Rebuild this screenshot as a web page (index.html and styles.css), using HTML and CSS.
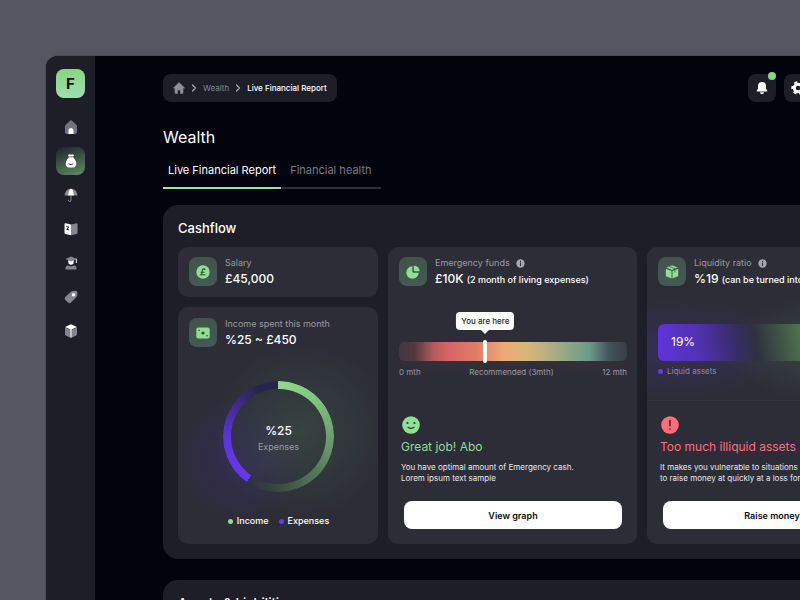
FILE: index.html
```html
<!DOCTYPE html>
<html lang="en">
<head>
    <meta charset="UTF-8">
    <meta name="viewport" content="width=device-width, initial-scale=1.0">
    <title>Wealth - Live Financial Report</title>
    <link rel="stylesheet" href="styles.css">
</head>
<body>
    <div class="app">
        <aside class="sidebar">
            <a href="#" class="logo">F</a>
            <nav class="menu">
                <a href="#" aria-label="Home">
                    <svg viewBox="0 0 14 14"><path d="M2 4.600 5.700 1a1.800 1.800 0 0 1 2.600 0L12 4.600q1 .9 1 2V12a2 2 0 0 1-2 2H3a2 2 0 0 1-2-2V6.600q0-1.100 1-2z" fill="#74747e"/><path d="M4.500 14v-3.500a2.500 2.500 0 0 1 5 0V14z" fill="#fff"/></svg>
                </a>
                <a href="#" class="active" aria-label="Wealth">
                    <svg viewBox="0 0 14 14"><rect x="4.200" y=".5" width="5.600" height="2" rx=".8" fill="#fff"/><path d="M4.800 3.300h4.400c.3 1 3.100 3 3.100 6.200 0 2.600-1.400 4-3.300 4H5c-1.900 0-3.300-1.400-3.300-4 0-3.200 2.800-5.200 3.100-6.200z" fill="#fff"/><path d="M5 10q2 1.800 4 0" stroke="#3b5442" stroke-width="1" stroke-linecap="round" fill="none"/></svg>
                </a>
                <a href="#" aria-label="Insurance">
                    <svg viewBox="0 0 14 14"><path d="M.7 7.500C.7 3.500 3.500.8 7 .8s6.300 2.700 6.300 6.700z" fill="#8a8a93"/><path d="M4.300 7.500C4.300 4 5.500.8 7 .8s2.700 3.200 2.700 6.700z" fill="#fff"/><path d="M7 7.500v4.700a1.300 1.300 0 0 1-2.600 0" stroke="#8a8a93" stroke-width="1" stroke-linecap="round" fill="none"/></svg>
                </a>
                <a href="#" aria-label="Reports">
                    <svg viewBox="0 0 14 14"><path d="M.5 2q0-1 1-.8L7 2.600v10.700l-5.500-1.400q-1-.3-1-1.200z" fill="#fff"/><path d="M7 2.600 12.600 1.200q.9-.1.900.8v8.700q0 .9-1 1.200L7 13.300z" fill="#85858e"/><path d="M2.300 4.500 5 5.200 2.600 7.300l2.600.6" stroke="#1e1e29" stroke-width="1" fill="none"/></svg>
                </a>
                <a href="#" aria-label="Learn">
                    <svg viewBox="0 0 14 14"><path d="M4.300 4h5.400v2a2.700 2.700 0 0 1-5.400 0z" fill="#fff"/><path d="M7 .5 13 3 7 5.500 1.500 3z" fill="#85858e"/><path d="M12.300 3.200v3.400" stroke="#fff" stroke-width="1" stroke-linecap="round"/><path d="M1.500 13.500v-1.700q0-2 2.200-2.300L7 10.500l3.300-1q2.200.3 2.200 2.300v1.700z" fill="#85858e"/></svg>
                </a>
                <a href="#" aria-label="Offers">
                    <svg viewBox="0 0 14 14"><path d="M7.300 1.600q.5-.5 1.300-.6l3.100-.2q1.500 0 1.600 1.500l-.1 3.200q-.1.800-.6 1.300L7 12.600q-1.500 1.200-3 0L1.200 9.800Q0 8.400 1.200 7z" fill="#85858e"/><circle cx="9.500" cy="4.800" r="1.700" fill="#fff"/></svg>
                </a>
                <a href="#" aria-label="Assets">
                    <svg viewBox="0 0 14 14"><path d="m1 3.600 5.500 2.300v7.800l-4.700-2.200q-.8-.4-.8-1.300zM13 3.600 7.500 5.900v7.800l4.700-2.200q.8-.4.8-1.300z" fill="#85858e"/><path d="m7 .3 6 2.800-6 2.700L1 3.100z" fill="#fff"/><path d="M7 5v8.600" stroke="#fff" stroke-width="1.300"/></svg>
                </a>
            </nav>
        </aside>

        <main class="content">
            <header class="topbar">
                <nav class="breadcrumb">
                    <a href="#" aria-label="Home"><svg class="crumb-home" viewBox="0 0 12 12"><path d="M6 .6 11.600 6H10v4.800q0 .7-.7.700H7.500V8h-3v3.500H2.700q-.7 0-.7-.7V6H.4z" fill="#8e8e98" stroke="#8e8e98" stroke-width=".6" stroke-linejoin="round"/></svg></a>
                    <svg class="chevron" viewBox="0 0 6 8"><path d="m1.500 1 3 3-3 3" fill="none" stroke="#a5a5ad" stroke-width="1.300" stroke-linecap="round" stroke-linejoin="round"/></svg>
                    <a href="#">Wealth</a>
                    <svg class="chevron" viewBox="0 0 6 8"><path d="m1.500 1 3 3-3 3" fill="none" stroke="#a5a5ad" stroke-width="1.300" stroke-linecap="round" stroke-linejoin="round"/></svg>
                    <span class="current">Live Financial Report</span>
                </nav>
                <div class="actions">
                    <button class="icon-button" aria-label="Notifications">
                        <svg viewBox="0 0 14 14"><path d="M7 1a4 4 0 0 1 4 4v2.500l1.300 2.200q.3.800-.6.800H2.300q-.9 0-.6-.8L3 7.500V5a4 4 0 0 1 4-4zM5 11.300h4a2 2 0 0 1-4 0z" fill="#fff"/></svg>
                        <span class="badge"></span>
                    </button>
                    <button class="icon-button" aria-label="Settings">
                        <svg viewBox="0 0 14 14"><circle cx="7" cy="7" r="3.700" fill="none" stroke="#fff" stroke-width="3"/><circle cx="7" cy="7" r="5.500" fill="none" stroke="#fff" stroke-width="2.400" stroke-dasharray="3 2.760" stroke-dashoffset="1.500"/></svg>
                    </button>
                </div>
            </header>

            <h1>Wealth</h1>
            <nav class="tabs">
                <a href="#" class="tab selected">Live Financial Report</a>
                <a href="#" class="tab">Financial health</a>
            </nav>

            <div class="panels">
                <section class="panel">
                    <h2>Cashflow</h2>
                    <div class="cards">
                        <div class="column">
                            <article class="card">
                                <div class="card-head">
                                    <span class="card-icon"><svg viewBox="0 0 14 14"><circle cx="7" cy="7" r="6.700" fill="#8fdf94"/><path d="M9 4.800c-.3-1.500-2.800-1.200-2.700.6.100 1.700.4 3.300-1.300 4.400h4M5 7.200h3" fill="none" stroke="#35483f" stroke-width="1.100" stroke-linecap="round"/></svg></span>
                                    <div>
                                        <p class="label">Salary</p>
                                        <p class="value">£45,000</p>
                                    </div>
                                </div>
                            </article>
                            <article class="card spent">
                                <div class="card-head">
                                    <span class="card-icon"><svg viewBox="0 0 14 14"><rect x=".3" y="1.500" width="13.400" height="11" rx="2" fill="#8fdf94"/><circle cx="7" cy="7" r="1.600" fill="#35483f"/><circle cx="3" cy="4.200" r=".8" fill="#35483f"/><circle cx="11" cy="9.800" r=".8" fill="#35483f"/></svg></span>
                                    <div>
                                        <p class="label">Income spent this month</p>
                                        <p class="value">%25 ~ £450</p>
                                    </div>
                                </div>
                                <div class="donut">
                                    <p class="value">%25</p>
                                    <p class="label">Expenses</p>
                                </div>
                                <ul class="legend">
                                    <li class="income">Income</li>
                                    <li class="expenses">Expenses</li>
                                </ul>
                            </article>
                        </div>

                        <article class="card">
                            <div class="card-head">
                                <span class="card-icon"><svg viewBox="0 0 14 14"><path d="M6.300 1.300v5.200q0 1.200 1.200 1.200h5.200A6.200 6.200 0 1 1 6.300 1.300z" fill="#8fdf94"/><path d="M7.800.4a6 6 0 0 1 5.800 5.800H8.800q-1 0-1-1z" fill="#8fdf94"/></svg></span>
                                <div>
                                    <p class="label">Emergency funds <svg class="info" viewBox="0 0 10 10"><circle cx="5" cy="5" r="4.600" fill="#a6a6ae"/><path d="M5 4.600v2.700M5 2.600v.5" stroke="#2d2d38" stroke-width="1.200" stroke-linecap="round"/></svg></p>
                                    <p class="value">£10K <small>(2 month of living expenses)</small></p>
                                </div>
                            </div>
                            <div class="chart">
                                <div class="range">
                                    <div class="marker"><span class="tooltip">You are here</span></div>
                                </div>
                                <div class="scale">
                                    <span>0 mth</span>
                                    <span>Recommended (3mth)</span>
                                    <span>12 mth</span>
                                </div>
                            </div>
                            <div class="message good">
                                <svg viewBox="0 0 18 18"><circle cx="9" cy="9" r="8.800" fill="#8fdf94"/><circle cx="5.500" cy="7" r="1.100" fill="#2d3b38"/><circle cx="12.500" cy="7" r="1.100" fill="#2d3b38"/><path d="M6 11.300q3 2.200 6 0" stroke="#2d3b38" stroke-width="1.200" stroke-linecap="round" fill="none"/></svg>
                                <h3>Great job! Abo</h3>
                                <p>You have optimal amount of Emergency cash.<br>Lorem ipsum text sample</p>
                                <button class="main-button">View graph</button>
                            </div>
                        </article>

                        <article class="card">
                            <div class="card-head">
                                <span class="card-icon"><svg viewBox="0 0 14 14"><path d="m7 .3 5.500 2.300L7 4.900 1.500 2.600zM.8 3.700 6.500 6v7.600l-4.900-2q-.8-.3-.8-1.100zM13.200 3.700 7.500 6v7.600l4.900-2q.8-.3.8-1.100z" fill="#8fdf94"/><path d="m4 1.300 6 2.500v3.500" stroke="#42564c" stroke-width=".8" fill="none"/></svg></span>
                                <div>
                                    <p class="label">Liquidity ratio <svg class="info" viewBox="0 0 10 10"><circle cx="5" cy="5" r="4.600" fill="#a6a6ae"/><path d="M5 4.600v2.700M5 2.600v.5" stroke="#2d2d38" stroke-width="1.200" stroke-linecap="round"/></svg></p>
                                    <p class="value">%19 <small>(can be turned into cash)</small></p>
                                </div>
                            </div>
                            <div class="chart ratio">
                                <div class="ratio-bar">19%</div>
                                <p class="ratio-label">Liquid assets</p>
                            </div>
                            <div class="message bad">
                                <svg viewBox="0 0 18 18"><circle cx="9" cy="9" r="8.800" fill="#ff6e78"/><path d="M9 4.500v5.300M9 13v.2" stroke="#4a2430" stroke-width="1.600" stroke-linecap="round"/></svg>
                                <h3>Too much illiquid assets</h3>
                                <p>It makes you vulnerable to situations where you need<br>to raise money at quickly at a loss for urgent needs</p>
                                <button class="main-button">Raise money</button>
                            </div>
                        </article>
                    </div>
                </section>

                <section class="panel">
                    <h2>Assets &amp; Liabilities</h2>
                </section>
            </div>
        </main>
    </div>
</body>
</html>
```
FILE: styles.css
```css
* {
    box-sizing: border-box;
}
body {
    margin: 0;
    height: 100vh;
    overflow: hidden;
    padding: 56px 0 0 46px;
    background-color: #565663;
    color: #fff;
    font-family: Inter, "Liberation Sans", sans-serif;
}
h1, h2, h3, p, ul {
    margin: 0;
    padding: 0;
}
a {
    color: inherit;
    text-decoration: none;
}
svg {
    display: block;
}
button {
    border: none;
    font-family: inherit;
    cursor: pointer;
}
.app {
    display: flex;
    height: 100%;
    background-color: #03030d;
    border-top-left-radius: 12px;
    box-shadow: 0 0 0 1px #4b4b58;
    overflow: hidden;
}

/* sidebar */
.sidebar {
    flex: 0 0 49px;
    padding: 13px 10px 0;
    background-color: #1e1e29;
}
.logo {
    display: flex;
    align-items: center;
    justify-content: center;
    height: 29px;
    border-radius: 8px;
    background: linear-gradient(#8ad580, #a0deb0);
    color: #0c120e;
    font-size: 15px;
    font-weight: 700;
}
.menu {
    display: flex;
    flex-direction: column;
    gap: 6px;
    margin-top: 15px;
}
.menu a {
    display: flex;
    align-items: center;
    justify-content: center;
    height: 28px;
    border-radius: 8px;
}
.menu a.active {
    background: linear-gradient(160deg, #272c33 10%, #5e8d62);
}
.menu svg {
    width: 14px;
    height: 14px;
}

/* content */
.content {
    flex: 1;
    min-width: 0;
    padding: 18px 0 0 68px;
}
.topbar {
    display: flex;
    justify-content: space-between;
    margin-right: -12px;
}
.breadcrumb {
    display: flex;
    align-items: center;
    gap: 6px;
    height: 28px;
    padding: 0 10px;
    border-radius: 8px;
    background-color: #1e1e28;
    color: #85858f;
    font-size: 8px;
}
.crumb-home {
    width: 12px;
    height: 12px;
}
.chevron {
    width: 6px;
    height: 8px;
}
.current {
    color: #fff;
    font-weight: 500;
}
.actions {
    display: flex;
    gap: 8px;
}
.icon-button {
    position: relative;
    display: flex;
    align-items: center;
    justify-content: center;
    width: 28px;
    height: 28px;
    padding: 0;
    border-radius: 8px;
    background-color: #1e1e28;
}
.icon-button svg {
    width: 14px;
    height: 14px;
}
.badge {
    position: absolute;
    top: -2px;
    right: 0;
    width: 8px;
    height: 8px;
    border-radius: 50%;
    background-color: #84d883;
}
h1 {
    margin-top: 25px;
    font-size: 16px;
    line-height: 20px;
    font-weight: 400;
}
.tabs {
    display: flex;
    width: max-content;
    margin-top: 12px;
}
.tab {
    padding: 3px 9px 9px;
    border-bottom: 2px solid #2e2e38;
    color: #7b7b84;
    font-size: 11px;
    line-height: 16px;
    font-weight: 400;
}
.tab.selected {
    padding: 3px 5px 9px;
    border-color: #a2dfa6;
    color: #fff;
}
.panels {
    display: flex;
    flex-direction: column;
    gap: 21px;
    width: max-content;
    margin-top: 16px;
}
.panel {
    padding: 15px;
    border-radius: 15px;
    background-color: #1e1e28;
}
h2 {
    font-size: 13px;
    line-height: 16px;
    font-weight: 500;
}
.cards {
    display: grid;
    grid-template-columns: 200px 249px 249px;
    gap: 10px;
    margin-top: 11px;
}
.column {
    display: flex;
    flex-direction: column;
    gap: 10px;
}
.card {
    display: flex;
    flex-direction: column;
    padding: 10px 10px 10px 11px;
    border-radius: 10px;
    background-color: #2d2d38;
    overflow: hidden;
}
.card-head {
    display: flex;
    gap: 8px;
    height: 30px;
}
.card-icon {
    display: flex;
    align-items: center;
    justify-content: center;
    width: 28px;
    height: 29px;
    border-radius: 8px;
    background: linear-gradient(#40544a, #455a56);
}
.card-icon svg {
    width: 14px;
    height: 14px;
}
.label {
    display: flex;
    align-items: center;
    gap: 6px;
    color: #9a9aa3;
    font-size: 9px;
    line-height: 12px;
}
.info {
    width: 9px;
    height: 9px;
}
.value {
    margin-top: 2px;
    font-size: 12px;
    line-height: 16px;
    font-weight: 500;
    white-space: nowrap;
}
.value small {
    font-size: 9px;
}

/* income / expenses ring */
.spent {
    flex: 1;
    background:
        radial-gradient(circle at 62% 52%, rgba(88, 145, 88, 0.22), transparent 50%),
        radial-gradient(circle at 32% 64%, rgba(78, 40, 190, 0.2), transparent 32%),
        #2d2d38;
}
.spent .card-head {
    padding-top: 1px;
    height: 31px;
}
.donut {
    position: relative;
    display: flex;
    flex-direction: column;
    align-items: center;
    justify-content: center;
    align-self: center;
    width: 111px;
    height: 111px;
    margin-top: 33px;
}
.donut .label {
    margin-top: 2px;
}
.donut::before {
    content: "";
    position: absolute;
    inset: 0;
    border-radius: 50%;
    background: conic-gradient(#8fd98a 0deg, #82c780 40deg, #6b9c6c 95deg, #4a6a51 150deg, #38453e 185deg, rgba(56, 69, 62, 0) 212deg, transparent 215deg, #6637ee 215deg, #5f36dd 265deg, #3d2b88 310deg, #27264a 335deg, #26264a 360deg);
    mask: radial-gradient(circle, transparent 47px, #000 48px);
}
.legend {
    display: flex;
    align-self: center;
    gap: 10px;
    margin-top: 22px;
    font-size: 9px;
    line-height: 14px;
    font-weight: 500;
    list-style: none;
}
.legend li, .ratio-label {
    display: flex;
    align-items: center;
    gap: 4px;
}
.legend li::before, .ratio-label::before {
    content: "";
    width: 5px;
    height: 5px;
    border-radius: 50%;
    background-color: #6a38f5;
}
.legend .income::before {
    background-color: #8fdf94;
}

/* charts */
.chart {
    height: 114px;
    padding-top: 55px;
}
.range {
    position: relative;
    height: 19px;
    border-radius: 5px;
    background: linear-gradient(90deg, #44363f, #54393f 7%, #b25a5b 15%, #d86664 22%, #e07c69 34%, #ecaa76 46%, #dab57a 56%, #b0ad80 67%, #7ba289 79%, #6b978a 84%, #41545a 92%, #383e49);
    box-shadow: 0 8px 20px -8px rgba(220, 130, 100, 0.3);
}
.marker {
    position: absolute;
    left: 37%;
    top: -2px;
    width: 4px;
    height: 23px;
    border-radius: 2px;
    background-color: #fff;
}
.tooltip {
    position: absolute;
    bottom: 33px;
    left: 50%;
    transform: translateX(-50%);
    padding: 0 5px;
    border-radius: 4px;
    background-color: #fff;
    color: #1e1e28;
    font-size: 8px;
    line-height: 18px;
    font-weight: 500;
    white-space: nowrap;
}
.tooltip::after {
    content: "";
    position: absolute;
    top: 100%;
    left: 50%;
    margin-left: -4px;
    border: 4px solid transparent;
    border-top-color: #fff;
    border-bottom: none;
}
.scale {
    display: flex;
    justify-content: space-between;
    margin-top: 5px;
    color: #9a9aa3;
    font-size: 8px;
    line-height: 12px;
}
.ratio {
    margin: 0 -10px 0 -11px;
    padding: 37px 10px 0 11px;
    border-bottom: 1px solid #353541;
    background:
        radial-gradient(ellipse 50% 45% at 10% 55%, rgba(80, 50, 180, 0.22), transparent),
        radial-gradient(ellipse 55% 50% at 85% 55%, rgba(90, 140, 90, 0.3), transparent);
}
.ratio-bar {
    height: 37px;
    padding-left: 13px;
    border-radius: 6px;
    background: linear-gradient(80deg, #5f35dc, #5232b4 18%, #372d68 34%, #2f3040 43%, #405446 54%, #588558 68%, #7fc47d);
    font-size: 12px;
    line-height: 36px;
}
.ratio-label {
    margin-top: 4px;
    color: #8f8a9f;
    font-size: 8px;
    line-height: 12px;
}

/* messages */
.message {
    display: flex;
    flex-direction: column;
    padding: 15px 5px 5px 2px;
}
.message svg {
    width: 18px;
    height: 18px;
    margin-left: 1px;
}
.message h3 {
    margin-top: 5px;
    font-size: 12px;
    line-height: 16px;
    font-weight: 400;
}
.message p {
    margin-top: 7px;
    color: #e8e8ec;
    font-size: 8px;
    line-height: 11px;
    white-space: nowrap;
}
.good h3 {
    color: #8fdf94;
}
.bad h3 {
    color: #ff6e78;
}
.main-button {
    height: 28px;
    margin: 17px 0 0 3px;
    border-radius: 8px;
    background-color: #fff;
    color: #0a0a12;
    font-size: 9px;
    font-weight: 600;
}
```
